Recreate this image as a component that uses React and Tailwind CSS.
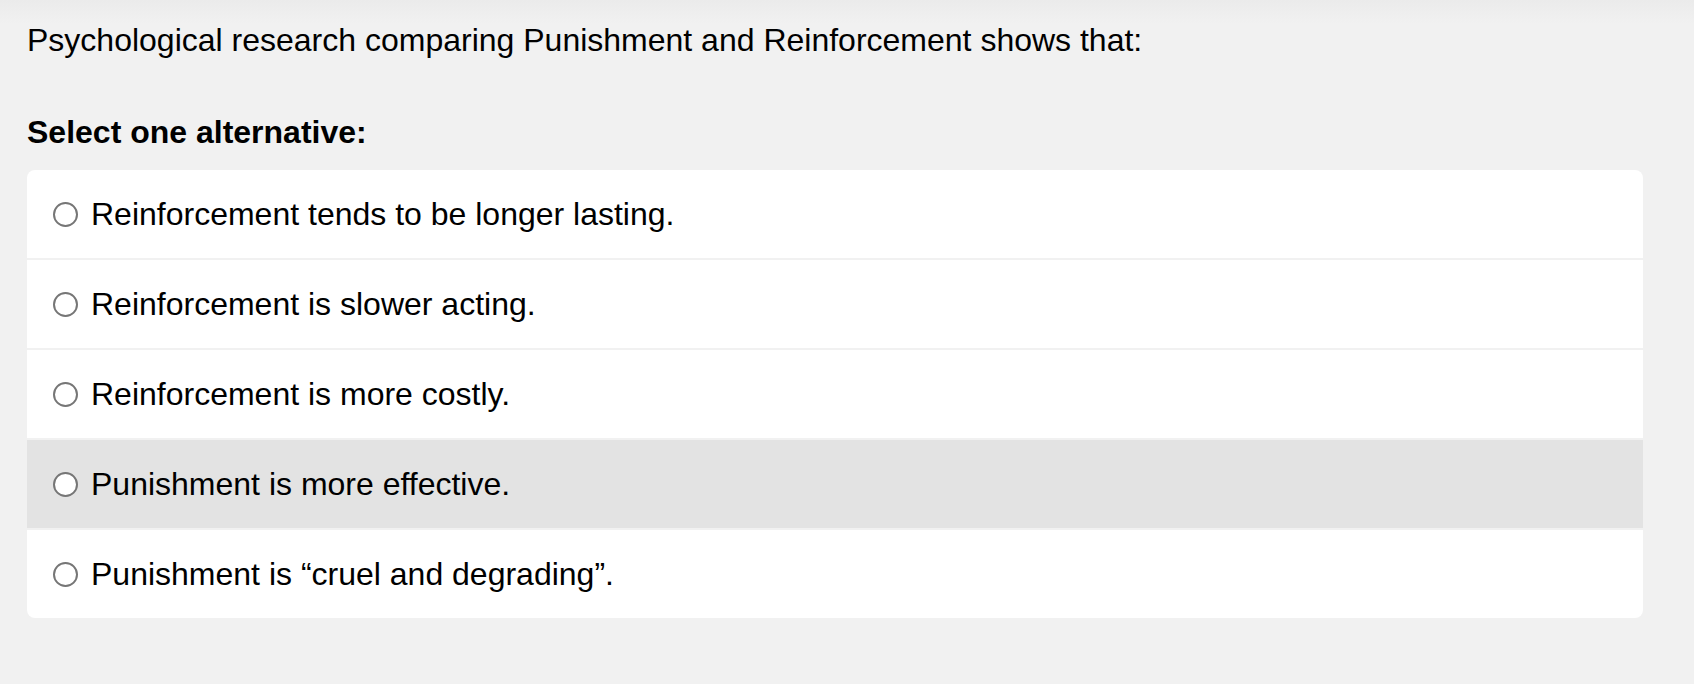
import React, { useState } from "react"

const options = [
  "Reinforcement tends to be longer lasting.",
  "Reinforcement is slower acting.",
  "Reinforcement is more costly.",
  "Punishment is more effective.",
  "Punishment is \u201ccruel and degrading\u201d.",
]

export default function App() {
  const [hovered, setHovered] = useState(3)

  return (
    <div
      className="min-h-screen w-full bg-[#f1f1f1] bg-gradient-to-b from-[#ebebeb] to-[#f1f1f1] bg-no-repeat bg-[length:100%_24px] pl-[27px] pr-[51px] pt-[20px] pb-[65px] text-black"
      style={{ fontFamily: '"Liberation Sans", Arial, sans-serif' }}
    >
      <p className="text-[32px] leading-[40px]">
        Psychological research comparing Punishment and Reinforcement shows that:
      </p>

      <p className="mt-[52px] text-[32px] font-bold leading-[40px]">Select one alternative:</p>

      <div className="mt-[18px] flex flex-col gap-[2px] overflow-hidden rounded-[8px]">
        {options.map((label, i) => (
          <label
            key={i}
            onMouseEnter={() => setHovered(i)}
            className={`flex h-[88px] cursor-pointer items-center pl-[26px] ${
              hovered === i ? "bg-[#e3e3e3]" : "bg-white"
            }`}
          >
            <span className="mr-[13px] h-[25px] w-[25px] shrink-0 rounded-full border-2 border-[#767676] bg-white" />
            <span className="text-[32px] leading-[36px]">{label}</span>
          </label>
        ))}
      </div>
    </div>
  )
}
